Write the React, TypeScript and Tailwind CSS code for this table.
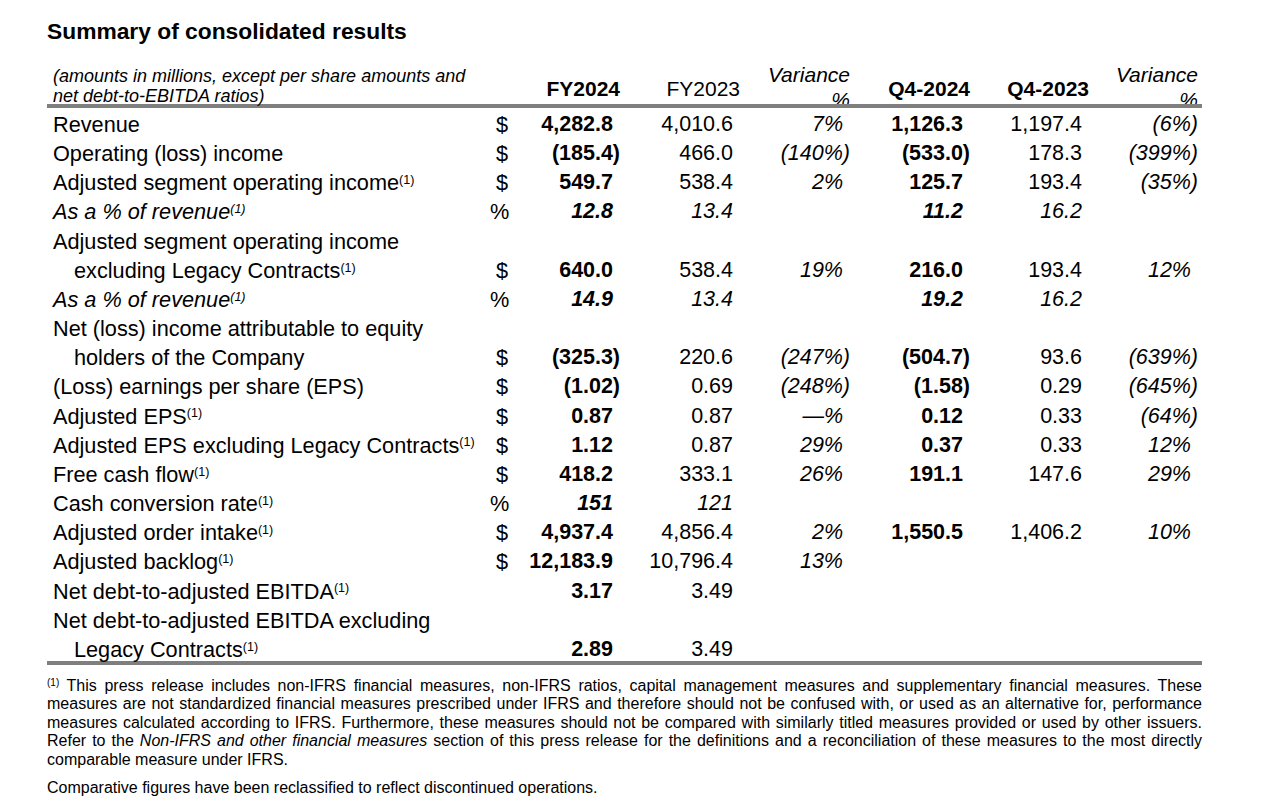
import React from 'react';

type Row = {
  label: string;
  sup?: boolean;
  italic?: boolean;
  indent?: boolean;
  unit?: string;
  vals?: string[];
  italicVals?: boolean;
  last?: boolean;
};

const rows: Row[] = [
  { label: 'Revenue', unit: '$', vals: ['4,282.8', '4,010.6', '7%', '1,126.3', '1,197.4', '(6%)'] },
  { label: 'Operating (loss) income', unit: '$', vals: ['(185.4)', '466.0', '(140%)', '(533.0)', '178.3', '(399%)'] },
  { label: 'Adjusted segment operating income', sup: true, unit: '$', vals: ['549.7', '538.4', '2%', '125.7', '193.4', '(35%)'] },
  { label: 'As a % of revenue', sup: true, italic: true, unit: '%', italicVals: true, vals: ['12.8', '13.4', '', '11.2', '16.2', ''] },
  { label: 'Adjusted segment operating income' },
  { label: 'excluding Legacy Contracts', sup: true, indent: true, unit: '$', vals: ['640.0', '538.4', '19%', '216.0', '193.4', '12%'] },
  { label: 'As a % of revenue', sup: true, italic: true, unit: '%', italicVals: true, vals: ['14.9', '13.4', '', '19.2', '16.2', ''] },
  { label: 'Net (loss) income attributable to equity' },
  { label: 'holders of the Company', indent: true, unit: '$', vals: ['(325.3)', '220.6', '(247%)', '(504.7)', '93.6', '(639%)'] },
  { label: '(Loss) earnings per share (EPS)', unit: '$', vals: ['(1.02)', '0.69', '(248%)', '(1.58)', '0.29', '(645%)'] },
  { label: 'Adjusted EPS', sup: true, unit: '$', vals: ['0.87', '0.87', '—%', '0.12', '0.33', '(64%)'] },
  { label: 'Adjusted EPS excluding Legacy Contracts', sup: true, unit: '$', vals: ['1.12', '0.87', '29%', '0.37', '0.33', '12%'] },
  { label: 'Free cash flow', sup: true, unit: '$', vals: ['418.2', '333.1', '26%', '191.1', '147.6', '29%'] },
  { label: 'Cash conversion rate', sup: true, unit: '%', italicVals: true, vals: ['151', '121', '', '', '', ''] },
  { label: 'Adjusted order intake', sup: true, unit: '$', vals: ['4,937.4', '4,856.4', '2%', '1,550.5', '1,406.2', '10%'] },
  { label: 'Adjusted backlog', sup: true, unit: '$', vals: ['12,183.9', '10,796.4', '13%', '', '', ''] },
  { label: 'Net debt-to-adjusted EBITDA', sup: true, vals: ['3.17', '3.49', '', '', '', ''] },
  { label: 'Net debt-to-adjusted EBITDA excluding' },
  { label: 'Legacy Contracts', sup: true, indent: true, vals: ['2.89', '3.49', '', '', '', ''], last: true },
];

// FY2024 and Q4-2024 bold, variance columns italic
const boldCols = [true, false, false, true, false, false];
const italicCols = [false, false, true, false, false, true];

const GRID = 'grid grid-cols-[443px_18px_112px_120px_110px_120px_119px_109px]';

function Sup() {
  return <sup className="text-[12.5px] font-normal">(1)</sup>;
}

function Cell({ value, bold, italic }: { value: string; bold: boolean; italic: boolean }) {
  if (!value) return <div />;
  const hang = value.endsWith(')');
  return (
    <div
      className={`text-right text-[21.5px] whitespace-nowrap ${bold ? 'font-bold' : 'font-normal'} ${italic ? 'italic' : 'not-italic'} ${hang ? 'pr-0' : 'pr-[7px]'}`}
    >
      {value}
    </div>
  );
}

function HeaderCell({ text, bold }: { text: string; bold?: boolean }) {
  return (
    <div className="flex flex-col justify-end h-[44px]">
      <div className={`text-right text-[21px] leading-[24px] pb-[3px] whitespace-nowrap ${bold ? 'font-bold' : ''}`}>
        {text}
      </div>
    </div>
  );
}

function VarianceHeader() {
  return (
    <div className="flex flex-col justify-end h-[44px] overflow-hidden">
      <div className="text-right text-[21px] leading-[25px] italic -mb-[8px]">
        <div>Variance</div>
        <div>%</div>
      </div>
    </div>
  );
}

export default function App() {
  return (
    <div
      className="w-[1268px] h-[812px] bg-white text-black pl-[47px] pr-[66px] pt-[19px]"
      style={{ fontFamily: '"Liberation Sans", Arial, sans-serif' }}
    >
      <h1 className="text-[22.8px] leading-[25px] font-bold mb-[16px]">Summary of consolidated results</h1>

      {/* column headers */}
      <div className={GRID}>
        <div className="col-span-2 flex flex-col justify-end h-[44px]">
          <div className="italic text-[18px] leading-[20.7px] pl-[6px] -mb-[3px]">
            <div>(amounts in millions, except per share amounts and</div>
            <div>net debt-to-EBITDA ratios)</div>
          </div>
        </div>
        <HeaderCell text="FY2024" bold />
        <HeaderCell text="FY2023" />
        <VarianceHeader />
        <HeaderCell text="Q4-2024" bold />
        <HeaderCell text="Q4-2023" bold />
        <VarianceHeader />
      </div>
      <div className="h-[4px] bg-[#7f7f7f]" />

      {/* rows */}
      <div className="mt-[2px] text-[21.7px]">
        {rows.map((r, i) => (
          <div key={i} className={`${GRID} ${r.last ? 'h-[26px]' : 'h-[29.17px]'} leading-[29.17px]`}>
            <div className={`whitespace-nowrap ${r.indent ? 'pl-[27px]' : 'pl-[6px]'} ${r.italic ? 'italic' : ''}`}>
              {r.label}
              {r.sup && <Sup />}
            </div>
            <div className="text-right">{r.unit ?? ''}</div>
            {(r.vals ?? ['', '', '', '', '', '']).map((v, j) => (
              <Cell key={j} value={v} bold={boldCols[j]} italic={italicCols[j] || !!r.italicVals} />
            ))}
          </div>
        ))}
      </div>
      <div className="h-[4px] bg-[#7f7f7f]" />

      {/* footnotes */}
      <div className="mt-[12px] text-[16px] leading-[18.5px]">
        <div className="text-justify [text-align-last:justify]">
          <sup className="text-[10px]">(1)</sup> This press release includes non-IFRS financial measures, non-IFRS ratios,
          capital management measures and supplementary financial measures. These
        </div>
        <div className="text-justify [text-align-last:justify]">
          measures are not standardized financial measures prescribed under IFRS and therefore should not be confused with, or used as an alternative for, performance
        </div>
        <div className="text-justify [text-align-last:justify]">
          measures calculated according to IFRS. Furthermore, these measures should not be compared with similarly titled measures provided or used by other issuers.
        </div>
        <div className="text-justify [text-align-last:justify]">
          Refer to the <span className="italic">Non-IFRS and other financial measures</span> section of this press release for the definitions and a reconciliation of these measures to the most directly
        </div>
        <div>comparable measure under IFRS.</div>
        <div className="mt-[10px]">Comparative figures have been reclassified to reflect discontinued operations.</div>
      </div>
    </div>
  );
}
